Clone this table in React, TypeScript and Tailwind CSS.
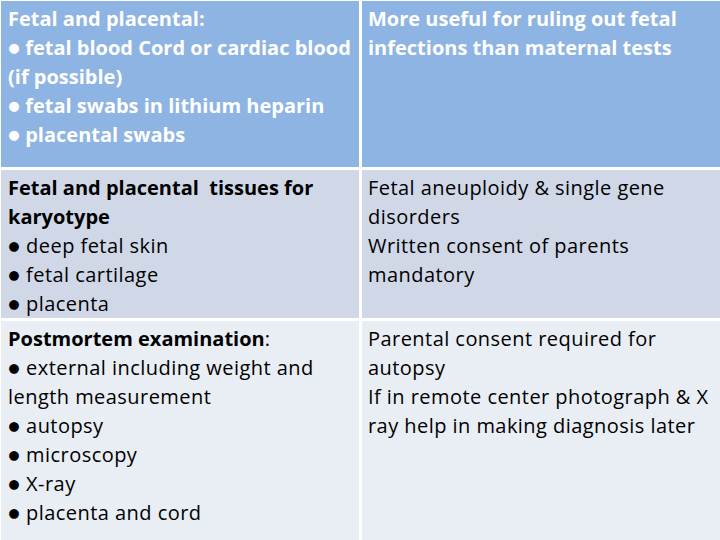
const B = ({ children }: { children: React.ReactNode }) => (
  <b className="font-bold tracking-normal">{children}</b>
);

const ROWS = [
  {
    bg: "bg-[#8eb4e3]",
    h: "h-[166px]",
    text: "text-white font-bold",
    left: (
      <>
        Fetal and placental:
        <br />● fetal blood Cord or cardiac blood
        <br />(if possible)
        <br />● fetal swabs in lithium heparin
        <br />● placental swabs
      </>
    ),
    right: (
      <>
        More useful for ruling out fetal
        <br />
        infections than maternal tests
      </>
    ),
  },
  {
    bg: "bg-[#d0d8e8]",
    h: "h-[148px]",
    text: "text-black tracking-[0.45px]",
    left: (
      <>
        <B>Fetal and placental&nbsp; tissues for</B>
        <br />
        <B>karyotype</B>
        <br />● deep fetal skin
        <br />● fetal cartilage
        <br />● placenta
      </>
    ),
    right: (
      <>
        Fetal aneuploidy &amp; single gene
        <br />
        disorders
        <br />
        Written consent of parents
        <br />
        mandatory
      </>
    ),
  },
  {
    bg: "bg-[#e9edf4]",
    h: "flex-1",
    text: "text-black tracking-[0.45px]",
    left: (
      <>
        <B>Postmortem examination</B>:
        <br />● external including weight and
        <br />length measurement
        <br />● autopsy
        <br />● microscopy
        <br />● X-ray
        <br />● placenta and cord
      </>
    ),
    right: (
      <>
        Parental consent required for
        <br />
        autopsy
        <br />
        If in remote center photograph &amp; X
        <br />
        ray help in making diagnosis later
      </>
    ),
  },
];

export default function App() {
  return (
    <div
      className="w-[720px] h-[540px] bg-white flex flex-col gap-[3px] pt-px pl-px overflow-hidden"
      style={{ fontFamily: "'Open Sans', Lato, sans-serif" }}
    >
      {ROWS.map((r, i) => (
        <div key={i} className={`flex gap-[3px] ${r.h}`}>
          <div className={`w-[358px] ${r.bg} ${r.text} px-[7px] pt-[3px] text-[20px] leading-[29px] whitespace-nowrap`}>
            {r.left}
          </div>
          <div className={`flex-1 ${r.bg} ${r.text} px-[6px] pt-[3px] text-[20px] leading-[29px] whitespace-nowrap`}>
            {r.right}
          </div>
        </div>
      ))}
    </div>
  );
}
